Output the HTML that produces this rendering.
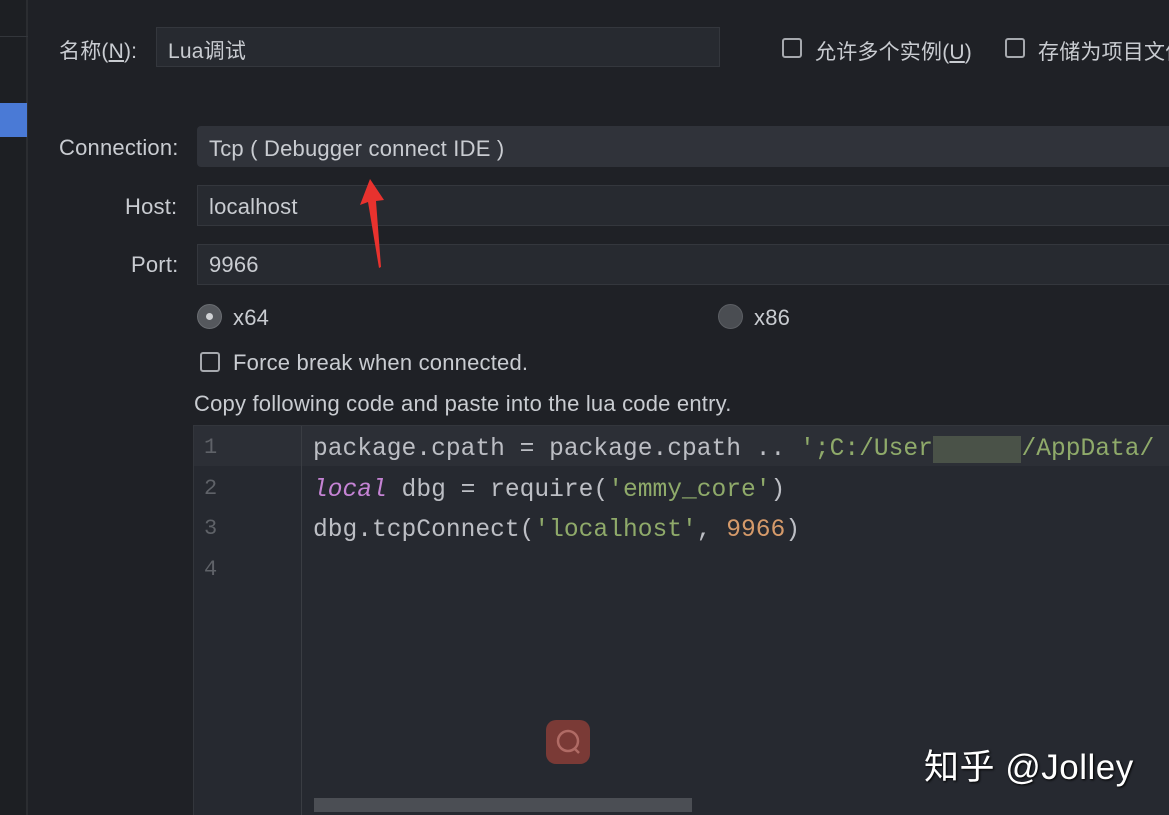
<!DOCTYPE html>
<html><head><meta charset="utf-8"><style>
*{margin:0;padding:0;box-sizing:border-box}
body{width:1169px;height:815px;background:#1f2126;overflow:hidden;position:relative;font-family:"Liberation Sans","Noto Sans CJK SC",sans-serif;color:#c9ccd1;font-size:21px;letter-spacing:0.2px}
.a{position:absolute;white-space:nowrap}
.f{position:absolute;background:#272a30;border:1px solid #34373d}
.cb{position:absolute;width:20px;height:20px;border:2px solid #a6a9ae;border-radius:3px}
.mono{font-family:"Liberation Mono",monospace;font-size:24.6px;color:#bcbec4;letter-spacing:0}
</style></head><body>
<div class="a" style="left:0;top:0;width:28px;height:815px;background:#1d1f23;border-right:2px solid #2b2d31"></div>
<div class="a" style="left:0;top:36px;width:28px;height:1px;background:#33363b"></div>
<div class="a" style="left:0;top:103px;width:27px;height:34px;background:#4a7ad6"></div>

<div class="a" style="left:59px;top:35px">名称(<u>N</u>):</div>
<div class="f" style="left:156px;top:27px;width:564px;height:40px"></div>
<div class="a" style="left:168px;top:35px">Lua调试</div>
<div class="cb" style="left:782px;top:38px"></div>
<div class="a" style="left:815px;top:36px">允许多个实例(<u>U</u>)</div>
<div class="cb" style="left:1005px;top:38px"></div>
<div class="a" style="left:1038px;top:36px">存储为项目文件</div>

<div class="a" style="left:59px;top:135px;font-size:22px">Connection:</div>
<div class="a" style="top:126px;width:996px;height:41px;background:#30333a;border-radius:4px 0 0 4px;left:197px"></div>
<div class="a" style="left:209px;top:136px;font-size:22px">Tcp ( Debugger connect IDE )</div>
<div class="a" style="left:125px;top:194px;font-size:22px">Host:</div>
<div class="f" style="left:197px;top:185px;width:980px;height:41px"></div>
<div class="a" style="left:209px;top:194px;font-size:22px">localhost</div>
<div class="a" style="left:131px;top:252px;font-size:22px">Port:</div>
<div class="f" style="left:197px;top:244px;width:980px;height:41px"></div>
<div class="a" style="left:209px;top:252px;font-size:22px">9966</div>

<svg class="a" style="left:355px;top:175px" width="40" height="95"><path d="M15 4 L5 30 L13 27 L24 93 L26 92 L21 26 L29 25 Z" fill="#e8322e"/></svg>

<div class="a" style="left:197px;top:304px;width:25px;height:25px;border-radius:50%;background:#55585d;border:1px solid #6a6d72"></div>
<div class="a" style="left:206px;top:313px;width:7px;height:7px;border-radius:50%;background:#d0d2d5"></div>
<div class="a" style="left:233px;top:305px;font-size:22px">x64</div>
<div class="a" style="left:718px;top:304px;width:25px;height:25px;border-radius:50%;background:#4a4d52;border:1px solid #5c5f64"></div>
<div class="a" style="left:754px;top:305px;font-size:22px">x86</div>
<div class="cb" style="left:200px;top:352px"></div>
<div class="a" style="left:233px;top:350px;font-size:22px">Force break when connected.</div>
<div class="a" style="left:194px;top:391px;font-size:22px">Copy following code and paste into the lua code entry.</div>

<div class="a" style="left:193px;top:425px;width:976px;height:390px;background:#262930;border-left:1px solid #33363c;border-top:1px solid #33363c"></div>
<div class="a" style="left:194px;top:426px;width:975px;height:40px;background:#2c2f36"></div>
<div class="a" style="left:301px;top:426px;width:1px;height:389px;background:#3a3d43"></div>
<div class="a mono" style="left:204px;top:428px;color:#5f6268;font-size:22px;line-height:40.5px">1<br>2<br>3<br>4</div>
<div class="a mono" style="left:313px;top:430px;line-height:40.5px">package.cpath = package.cpath .. <span style="color:#8faa6a">';C:/User</span><span style="background:#4a5248;color:transparent">sxxxxx</span><span style="color:#8faa6a">/AppData/</span><br><i style="color:#c583d4">local</i> dbg = require(<span style="color:#8faa6a">'emmy_core'</span>)<br>dbg.tcpConnect(<span style="color:#8faa6a">'localhost'</span>, <span style="color:#d59a6a">9966</span>)</div>
<div class="a" style="left:314px;top:798px;width:378px;height:14px;background:#4b4e54"></div>
<div class="a" style="left:546px;top:720px;width:44px;height:44px;border-radius:10px;background:#7a3a36"></div>
<svg class="a" style="left:552px;top:726px" width="32" height="32"><circle cx="16" cy="15" r="10" fill="none" stroke="#b06b65" stroke-width="2.5"/><path d="M22 22 L27 27" stroke="#b06b65" stroke-width="2.5"/></svg>
<div class="a" style="left:924px;top:739px;font-size:35px;color:#fff;letter-spacing:0.5px;text-shadow:1px 1px 2px #000">知乎 @Jolley</div>
</body></html>
